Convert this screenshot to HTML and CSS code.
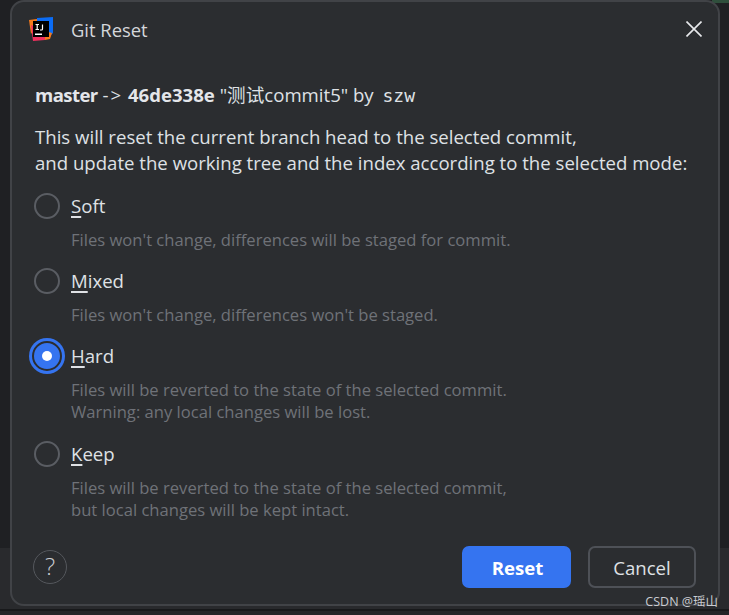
FILE: index.html
```html
<!DOCTYPE html>
<html lang="en">
<head>
    <meta charset="UTF-8">
    <meta name="viewport" content="width=device-width, initial-scale=1.0">
    <title>Git Reset</title>
    <link rel="stylesheet" href="styles.css">
</head>
<body>
    <div class="dialog">
        <div class="title-bar">
            <svg class="app-icon" width="24" height="24" viewBox="0 0 24 24">
                <path d="M8 1l16-1v16l-4 4H8z" fill="#0b6cf5"/>
                <path d="M0 3l8-1v6l-6 9z" fill="#f47a1c"/>
                <path d="M2 8l14 6 0 9-12 1z" fill="#f0305e"/>
                <path d="M16 14l7 2-2 6-5 1z" fill="#f47a1c"/>
                <rect x="4" y="4" width="16" height="16" fill="#000"/>
                <path d="M6.500 7.500h3.500M8.200 7.500v5M6.500 12.500h3.500M13.500 7.500v4.500q0 1-1 1h-1.500" fill="none" stroke="#fff" stroke-width="1.200"/>
                <rect x="6" y="16.500" width="7" height="1.500" fill="#fff"/>
            </svg>
            <span class="title">Git Reset</span>
            <svg class="close" width="16" height="16" viewBox="0 0 16 16">
                <path d="M0.500 0.500L15.500 15.500M15.500 0.500L0.500 15.500" stroke="#e8e9ec" stroke-width="1.600" fill="none"/>
            </svg>
        </div>

        <p class="commit"><b class="branch">master</b> <span class="arrow">-&gt;</span> <b>46de338e</b> "测试commit5" by <span class="mono">szw</span></p>
        <p class="intro">This will reset the current branch head to the selected commit,<br>and update the working tree and the index according to the selected mode:</p>

        <div class="modes">
            <div class="mode">
                <span class="radio"></span>
                <div>
                    <div class="mode-name"><u>S</u>oft</div>
                    <div class="mode-desc">Files won't change, differences will be staged for commit.</div>
                </div>
            </div>
            <div class="mode">
                <span class="radio"></span>
                <div>
                    <div class="mode-name"><u>M</u>ixed</div>
                    <div class="mode-desc">Files won't change, differences won't be staged.</div>
                </div>
            </div>
            <div class="mode hard">
                <span class="radio checked"></span>
                <div>
                    <div class="mode-name"><u>H</u>ard</div>
                    <div class="mode-desc">Files will be reverted to the state of the selected commit.<br>Warning: any local changes will be lost.</div>
                </div>
            </div>
            <div class="mode">
                <span class="radio"></span>
                <div>
                    <div class="mode-name"><u>K</u>eep</div>
                    <div class="mode-desc">Files will be reverted to the state of the selected commit,<br>but local changes will be kept intact.</div>
                </div>
            </div>
        </div>

        <div class="footer">
            <span class="help">?</span>
            <button class="btn primary">Reset</button>
            <button class="btn cancel">Cancel</button>
        </div>
    </div>
    <span class="watermark">CSDN @瑶山</span>
</body>
</html>
```

FILE: styles.css
```css
html, body {
    height: 100%;
}

body {
    margin: 0;
    background:
        linear-gradient(#2f4f3c, #2f4f3c) 712px 0 / 17px 3px no-repeat,
        linear-gradient(#1f2023 548px, #292a2d 548px, #292a2d 609px, #18191b 609px, #18191b 611px, #242528 611px);
    font-family: "Open Sans", "Noto Sans CJK SC", sans-serif;
    overflow: hidden;
    position: relative;
}

.dialog {
    box-sizing: border-box;
    width: 710px;
    height: 606px;
    margin-left: 10px;
    padding: 0 22px 0 23px;
    background: #2b2d30;
    border: 2px solid #414347;
    border-radius: 14px;
    color: #dfe1e5;
}

.title-bar {
    display: flex;
    align-items: center;
    height: 54px;
}

.app-icon {
    margin-left: -6px;
}

.title {
    margin-left: 18px;
    font-size: 18.400px;
    color: #d5d7db;
    flex: 1;
}

.close {
    margin-right: -6px;
}

.commit {
    margin: 26px 0 0;
    font-size: 18.600px;
    line-height: 26px;
}

.commit b {
    font-weight: 700;
    color: #e4e6ea;
}

.commit .branch {
    letter-spacing: -0.600px;
}

.arrow {
    letter-spacing: 2px;
}

.mono {
    margin-left: 4px;
    font-family: "DejaVu Sans Mono", monospace;
    font-size: 18px;
}

.intro {
    margin: 15px 0 0;
    font-size: 18.600px;
    line-height: 26px;
}

.modes {
    margin-top: 17px;
    margin-left: -1px;
    display: flex;
    flex-direction: column;
    gap: 17px;
}

.mode {
    display: flex;
    gap: 11px;
}

.mode.hard {
    margin-bottom: 1px;
}

.radio {
    box-sizing: border-box;
    flex: none;
    width: 26px;
    height: 26px;
    border: 2px solid #5a5d63;
    border-radius: 50%;
    background: #2b2d30;
}

.radio.checked {
    position: relative;
    width: 30px;
    height: 30px;
    margin: -2px;
    background: #3574f0;
    border: 2px solid #2b2d30;
    box-shadow: 0 0 0 3px #3574f0;
}

.radio.checked::after {
    content: "";
    position: absolute;
    top: 8px;
    left: 8px;
    width: 10px;
    height: 10px;
    border-radius: 50%;
    background: #fff;
}

.mode-name {
    font-size: 18.600px;
    line-height: 26px;
    color: #dfe1e5;
}

.mode-name u {
    text-decoration-thickness: 2px;
    text-underline-offset: 3px;
}

.mode-desc {
    margin-top: 10px;
    font-size: 16.600px;
    line-height: 22px;
    color: #6f7278;
}

.footer {
    display: flex;
    align-items: center;
    margin-top: 25px;
}

.help {
    box-sizing: border-box;
    width: 34px;
    height: 34px;
    margin-left: -2px;
    margin-right: auto;
    border: 1.500px solid #55585d;
    border-radius: 50%;
    text-align: center;
    font-size: 24px;
    font-weight: 300;
    line-height: 30px;
    color: #c9ccd1;
}

.btn {
    box-sizing: border-box;
    width: 109px;
    height: 42px;
    background: transparent;
    border: 2px solid #4e5157;
    border-radius: 7px;
    color: #dfe1e5;
    font-family: inherit;
    font-size: 18.600px;
}

.btn.primary {
    padding-left: 8px;
    background: #3574f0;
    border-color: #3574f0;
    color: #fff;
    font-weight: 700;
}

.btn.cancel {
    width: 108px;
    margin-left: 17px;
}

.watermark {
    position: absolute;
    right: 11px;
    bottom: 5px;
    font-size: 12.500px;
    color: #c9ccd1;
}
```
